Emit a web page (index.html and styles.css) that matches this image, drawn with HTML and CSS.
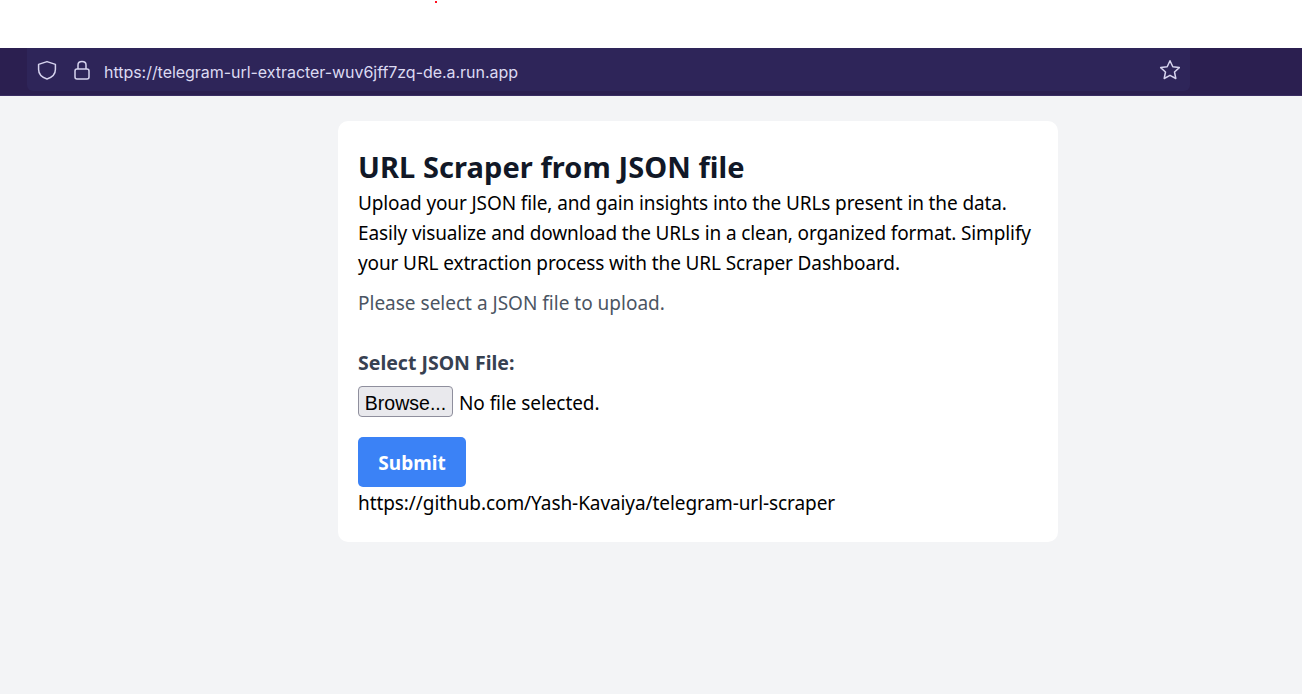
FILE: index.html
```html
<!DOCTYPE html>
<html>
<head>
    <title>URL Scraper from JSON file</title>
    <meta charset="UTF-8">
    <meta name="viewport" content="width=device-width, initial-scale=1.0">
    <link rel="stylesheet" href="styles.css">
</head>
<body>
    <div class="topgap"><span class="red-dot"></span></div>

    <div class="browser-bar">
        <div class="url-field">
            <svg class="icon" width="22" height="22" viewBox="0 0 22 22" fill="none" stroke="#d6d3ee" stroke-width="1.5" stroke-linejoin="round">
                <path d="M11 2.6 L19.4 5.4 V10.5 C19.4 15 16 18.4 11 20 C6 18.4 2.6 15 2.6 10.5 V5.4 Z"/>
            </svg>
            <svg class="icon lock" width="18" height="22" viewBox="0 0 18 22" fill="none" stroke="#d6d3ee" stroke-width="1.5">
                <rect x="2" y="10" width="14" height="10" rx="2"/>
                <path d="M5 10 V6 C5 1.4 13 1.4 13 6 V10"/>
            </svg>
            <span class="url-text">https://telegram-url-extracter-wuv6jff7zq-de.a.run.app</span>
            <svg class="star" width="22" height="22" viewBox="0 0 22 22" fill="none" stroke="#d6d3ee" stroke-width="1.5" stroke-linejoin="round">
                <path d="M11 1.8 L13.8 7.8 L20.3 8.6 L15.5 13 L16.8 19.5 L11 16.3 L5.2 19.5 L6.5 13 L1.7 8.6 L8.2 7.8 Z"/>
            </svg>
        </div>
    </div>

    <div class="page">
        <div class="card">
            <h1>URL Scraper from JSON file</h1>
            <p class="intro">Upload your JSON file, and gain insights into the URLs present in the data. Easily visualize and download the URLs in a clean, organized format. Simplify your URL extraction process with the URL Scraper Dashboard.</p>
            <p class="hint">Please select a JSON file to upload.</p>
            <form>
                <label class="file-label" for="json-file">Select JSON File:</label>
                <div class="file-row">
                    <button type="button" class="browse-btn" id="json-file">Browse...</button>
                    <span class="file-name">No file selected.</span>
                </div>
                <button type="button" class="submit-btn">Submit</button>
            </form>
            <div class="repo-link">https://github.com/Yash-Kavaiya/telegram-url-scraper</div>
        </div>
    </div>
</body>
</html>
```

FILE: styles.css
```css
* {
    box-sizing: border-box;
}
body {
    margin: 0;
    min-height: 694px;
    background-color: #f3f4f6;
    font-family: 'Noto Sans', sans-serif;
    font-size: 19px;
    letter-spacing: -0.08px;
    line-height: 30px;
    color: #000;
    overflow: hidden;
}
.topgap {
    position: relative;
    height: 48px;
    background-color: #fff;
}
.red-dot {
    position: absolute;
    left: 435px;
    top: 1px;
    width: 2px;
    height: 2px;
    background-color: #ff1020;
}
.browser-bar {
    height: 48px;
    padding: 0 112px 4px 27px;
    background-color: #2b1f50;
    border-bottom: 1px solid #3a2d63;
}
.url-field {
    display: flex;
    align-items: center;
    height: 43px;
    padding: 0 9px 0 8px;
    background-color: #2e2559;
    border-radius: 0 0 6px 6px;
}
.icon {
    flex: none;
    margin-left: 1px;
}
.lock {
    margin-left: 15px;
}
.url-text {
    margin-left: 13px;
    padding-top: 4px;
    font-family: 'Inter', sans-serif;
    font-size: 16px;
    letter-spacing: -0.04px;
    color: #dcdaf2;
}
.star {
    margin-left: auto;
}
.page {
    padding: 25px 244px 0 338px;
}
.card {
    width: 720px;
    padding: 26px 20px 24px;
    background-color: #fff;
    border-radius: 10px;
}
h1 {
    margin: 0 0 1px;
    font-size: 29px;
    letter-spacing: 0.08px;
    line-height: 40px;
    font-weight: 700;
    color: #111827;
}
.intro {
    margin: 0;
    letter-spacing: -0.12px;
}
.hint {
    margin: 10px 0 30px;
    letter-spacing: 0;
    color: #4b5563;
}
.file-label {
    display: block;
    font-size: 19.5px;
    letter-spacing: 0;
    font-weight: 700;
    color: #374151;
}
.file-row {
    display: flex;
    align-items: center;
    gap: 6px;
    margin-top: 8px;
    height: 31px;
}
.file-name {
    padding-top: 2px;
}
.browse-btn {
    height: 31px;
    width: 95px;
    padding: 4px 0 0;
    font-family: 'Liberation Sans', sans-serif;
    font-size: 19.5px;
    letter-spacing: 0;
    color: #000;
    background-color: #e9e9ed;
    border: 1px solid #8f8f9d;
    border-radius: 4px;
}
.submit-btn {
    display: block;
    width: 108px;
    height: 50px;
    margin-top: 20px;
    padding: 2px 0 0;
    font-family: inherit;
    font-size: 19px;
    letter-spacing: 0;
    font-weight: 700;
    color: #fff;
    background-color: #3b82f6;
    border: none;
    border-radius: 5px;
}
.repo-link {
    margin-top: 1px;
}
```
